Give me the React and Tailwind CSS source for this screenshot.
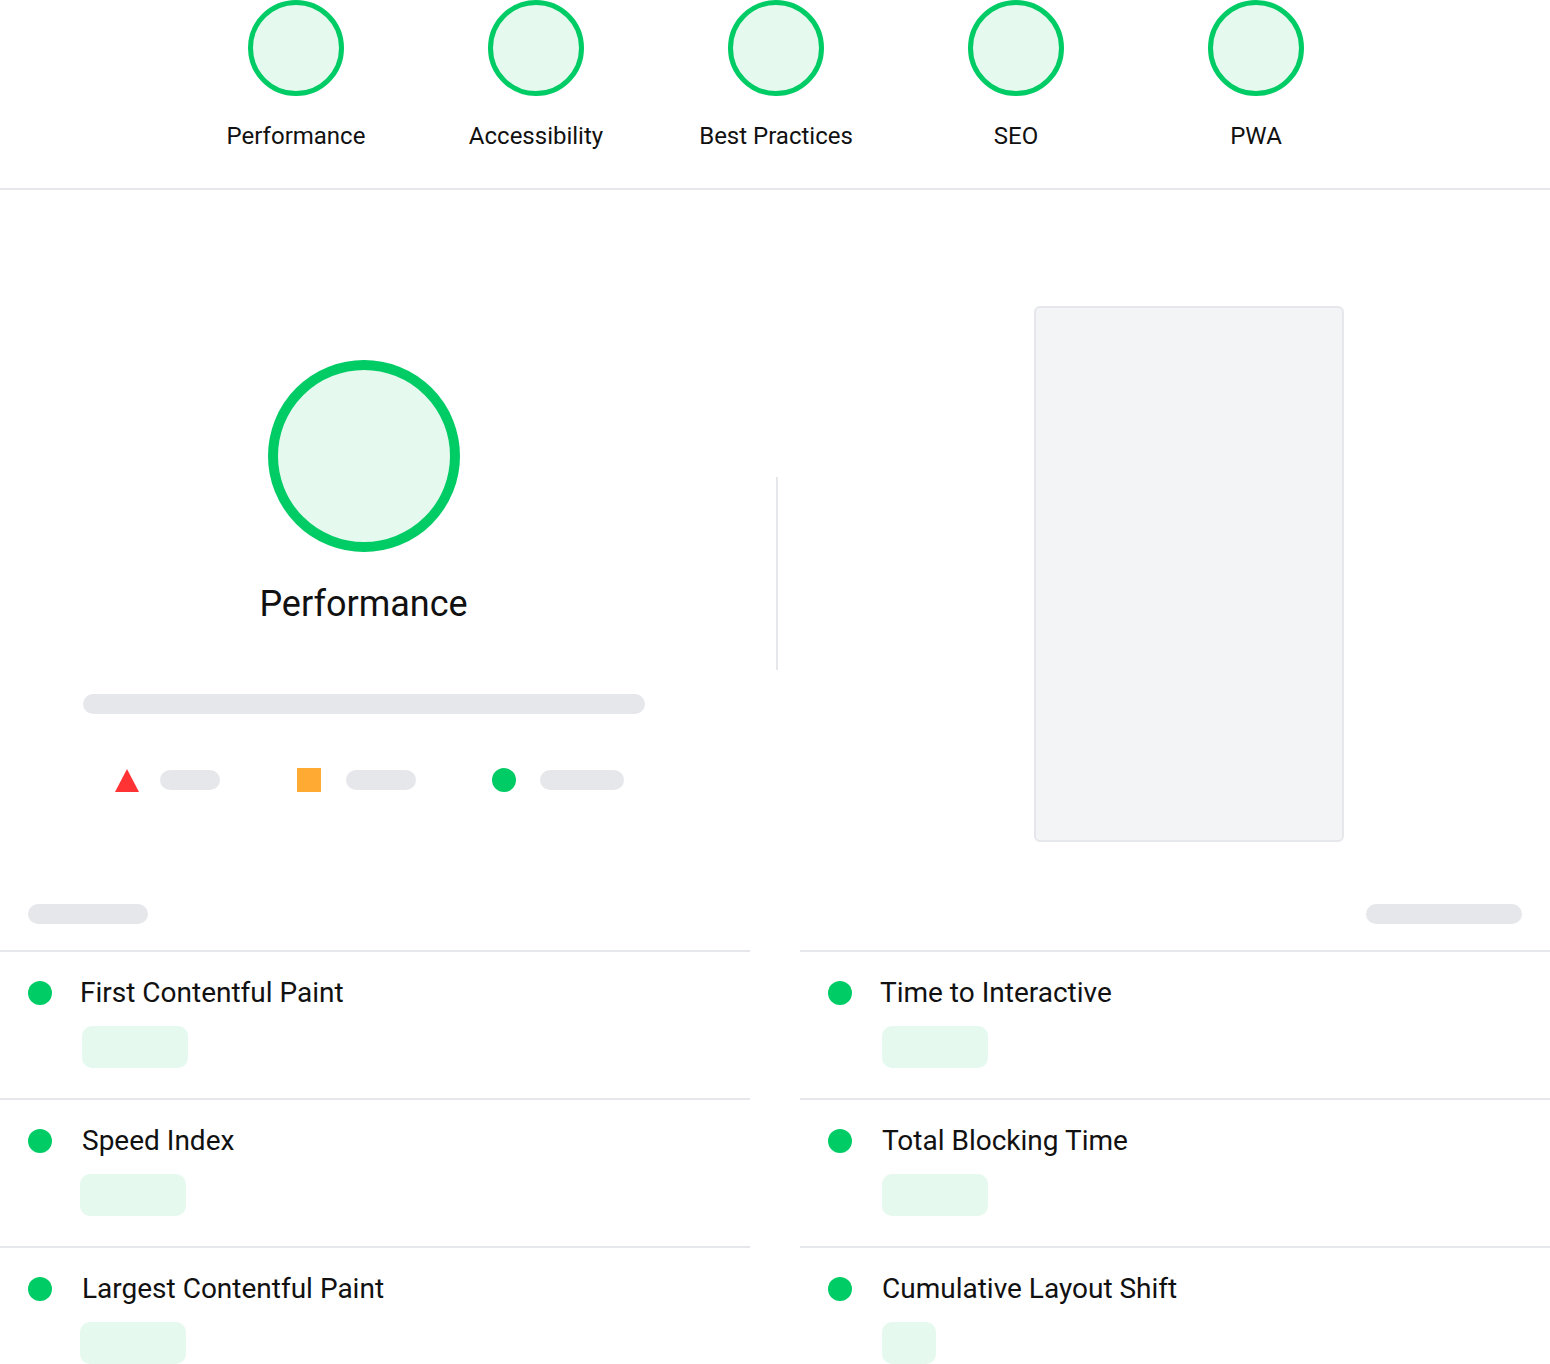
import React from 'react'

const categories = ['Performance', 'Accessibility', 'Best Practices', 'SEO', 'PWA']

const metrics = [
  [
    { label: 'First Contentful Paint', textMl: 'ml-[28px]', pillMl: 'ml-[54px]', pillW: 'w-[106px]' },
    { label: 'Speed Index', textMl: 'ml-[30px]', pillMl: 'ml-[52px]', pillW: 'w-[106px]' },
    { label: 'Largest Contentful Paint', textMl: 'ml-[30px]', pillMl: 'ml-[52px]', pillW: 'w-[106px]' },
  ],
  [
    { label: 'Time to Interactive', textMl: 'ml-[28px]', pillMl: 'ml-[54px]', pillW: 'w-[106px]' },
    { label: 'Total Blocking Time', textMl: 'ml-[30px]', pillMl: 'ml-[54px]', pillW: 'w-[106px]' },
    { label: 'Cumulative Layout Shift', textMl: 'ml-[30px]', pillMl: 'ml-[54px]', pillW: 'w-[54px]' },
  ],
]

const MetricRow = ({ label, textMl, pillMl, pillW }) => (
  <div className="h-[148px] border-t-2 border-[#e5e7eb] pl-[28px] pt-[23px]">
    <div className="flex items-center">
      <span className="w-6 h-6 rounded-full bg-[#00cc66] shrink-0" />
      <span className={`${textMl} text-[28px] leading-[36px] text-[#111]`}>{label}</span>
    </div>
    <div className={`${pillMl} ${pillW} mt-[15px] h-[42px] rounded-[10px] bg-[#e5f9ef]`} />
  </div>
)

export default function App() {
  return (
    <div className="bg-white w-[1550px] overflow-hidden" style={{ fontFamily: 'Roboto, "Noto Sans", sans-serif' }}>
      {/* Category gauges */}
      <div className="flex justify-center border-b-2 border-[#e5e7eb] pb-[36px] pl-[2px]">
        {categories.map((c) => (
          <div key={c} className="w-[240px] flex flex-col items-center">
            <div className="w-24 h-24 rounded-full border-[5px] border-[#00cc66] bg-[#e5f9ef]" />
            <div className="mt-[24px] text-[24px] leading-[32px] text-[#111]">{c}</div>
          </div>
        ))}
      </div>

      {/* Main summary */}
      <div className="flex items-start pt-[117px]">
        <div className="w-[727px] mt-[53px] flex flex-col items-center">
          <div className="w-48 h-48 rounded-full border-[10px] border-[#00cc66] bg-[#e5f9ef]" />
          <div className="mt-[30px] text-[36px] leading-[44px] text-[#111]">Performance</div>
          <div className="mt-[68px] w-[562px] h-5 rounded-full bg-[#e5e7eb]" />
          <div className="mt-[54px] self-start pl-[115px] flex items-center h-6">
            <svg width="24" height="24" viewBox="0 0 24 24">
              <polygon points="12,1 24,24 0,24" fill="#ff3333" />
            </svg>
            <div className="ml-[21px] w-[60px] h-5 rounded-full bg-[#e5e7eb]" />
            <div className="ml-[77px] w-6 h-6 bg-[#ffaa33]" />
            <div className="ml-[25px] w-[70px] h-5 rounded-full bg-[#e5e7eb]" />
            <div className="ml-[76px] w-6 h-6 rounded-full bg-[#00cc66]" />
            <div className="ml-[24px] w-[84px] h-5 rounded-full bg-[#e5e7eb]" />
          </div>
        </div>
        <div className="ml-[49px] mt-[170px] w-[2px] h-[193px] bg-[#e5e7eb]" />
        <div className="flex-1 pl-[50px] flex justify-center">
          <div className="w-[310px] h-[536px] -mt-px rounded-[6px] border-2 border-[#e5e7eb] bg-[#f3f4f6]" />
        </div>
      </div>

      <div className="mt-[62px] px-[28px] flex justify-between">
        <div className="w-[120px] h-5 rounded-full bg-[#e5e7eb]" />
        <div className="w-[156px] h-5 rounded-full bg-[#e5e7eb]" />
      </div>

      {/* Metrics */}
      <div className="mt-[26px] grid grid-cols-2 gap-x-[50px]">
        {metrics.map((col, i) => (
          <div key={i}>
            {col.map((m) => (
              <MetricRow key={m.label} {...m} />
            ))}
          </div>
        ))}
      </div>
    </div>
  )
}
